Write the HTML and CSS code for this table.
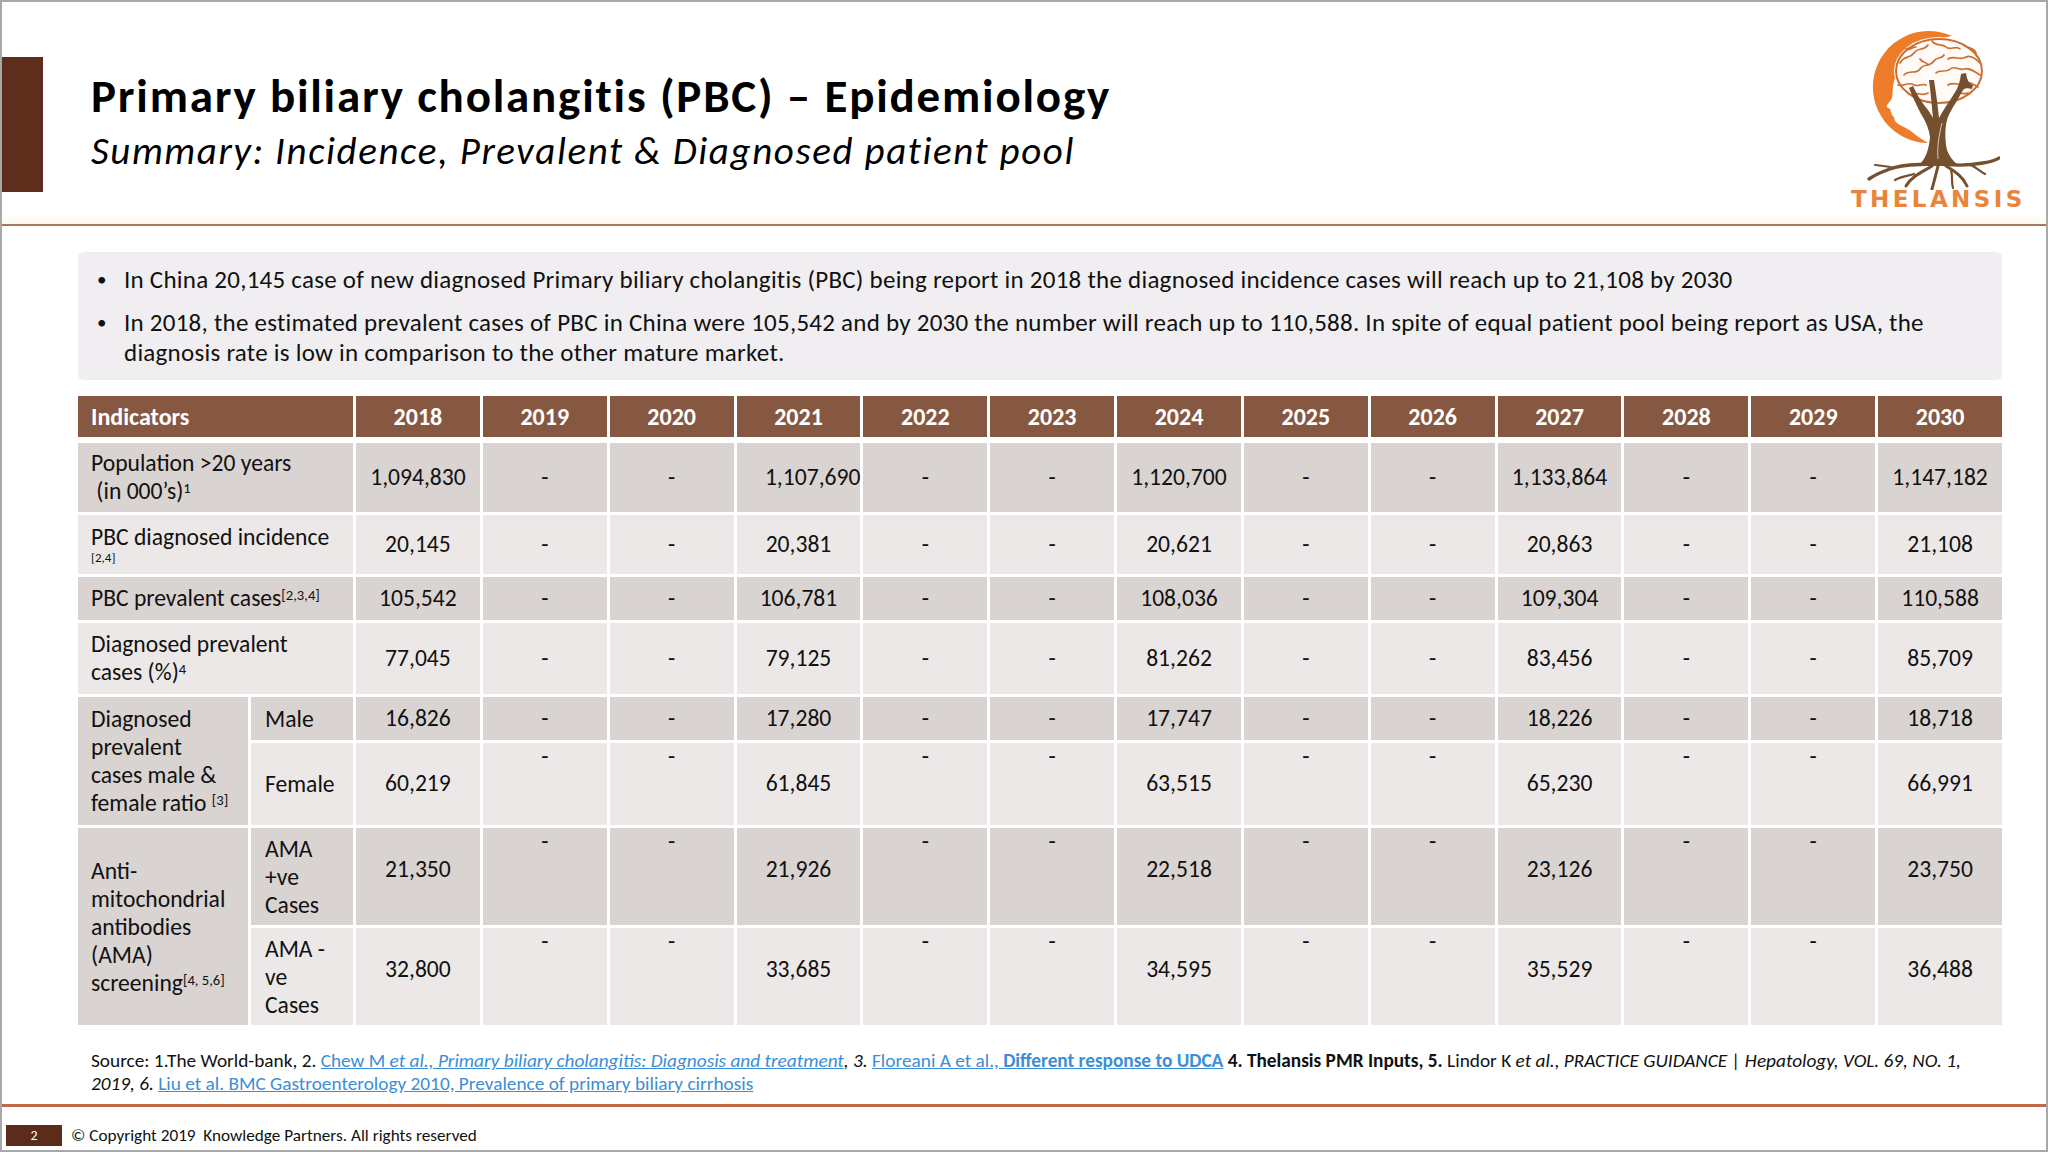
FILE: index.html
```html
<!DOCTYPE html>
<html lang="en">
<head>
<meta charset="utf-8">
<title>Primary biliary cholangitis (PBC) – Epidemiology</title>
<link rel="stylesheet" href="styles.css">
</head>
<body>
<div class="slide">
  <header class="head">
    <div class="accent"></div>
    <div class="titles">
      <h1>Primary biliary cholangitis (PBC) – Epidemiology</h1>
      <h2>Summary: Incidence, Prevalent &amp; Diagnosed patient pool</h2>
    </div>
    <div class="logo">
      <svg viewBox="0 0 150 165" width="150" height="165" aria-hidden="true">
        <path fill="#ee7d2b" d="M102,11 A56,56 0 1 0 78,118 C72,114 66,111 62,107 C56,102 50,101 47,98 C44,96 45,93 43,91 C41,90 42,88 41,87 C40,86 41,85 40,84 C38,83 36,82 37,80 C38,78 41,76 42,73 C43,69 42,61 45,53 C52,31 76,16 102,11 Z"/>
        <ellipse cx="89" cy="46" rx="45" ry="34" fill="#fff"/>
        <ellipse cx="89" cy="46" rx="43" ry="32" fill="#fffaf5" stroke="#c86f33" stroke-width="2"/>
        <g fill="none" stroke="#c86f33" stroke-width="1.7" stroke-linecap="round" stroke-linejoin="round">
          <path d="M50,38 C54,30 60,34 64,28 C68,22 74,26 78,20"/>
          <path d="M82,16 C86,22 92,18 96,22 C100,26 106,20 110,24"/>
          <path d="M114,20 C118,24 124,22 126,28"/>
          <path d="M54,50 C60,44 66,50 70,44 C74,38 80,42 84,36 C86,32 92,34 94,30"/>
          <path d="M98,34 C104,30 110,36 116,32 C120,30 126,34 130,38"/>
          <path d="M48,60 C54,62 58,56 64,60 C68,62 72,58 76,60"/>
          <path d="M86,48 C90,44 96,48 100,44 C104,40 110,46 114,44 C118,42 124,46 130,50"/>
          <path d="M62,70 C68,66 72,72 78,68"/>
          <path d="M98,60 C104,56 110,62 116,58 C120,56 124,60 128,62"/>
          <path d="M70,34 C72,38 76,36 78,40"/>
          <path d="M104,70 C108,66 114,70 118,68"/>
          <path d="M56,24 C60,26 62,22 66,22"/>
        </g>
        <path fill="#74502f" d="M68,141 C76,134 79,124 80,112 C79,104 76,97 71,89 C67,81 63,73 59,63 L63,61 C67,70 72,78 78,85 C80,88 82,91 83,93 C82,83 81,70 79,55 L84,55 C86,68 88,82 89,93 C93,85 99,77 104,69 C108,63 110,57 111,49 L116,48 C117,55 119,59 123,60 L122,64 C117,63 115,63 113,65 C109,73 102,83 98,92 C95,100 95,110 96,120 C97,128 101,134 109,141 Z"/>
        <path fill="none" stroke="#fff" stroke-width="0.9" opacity="0.75" d="M88,134 C87,122 89,110 92,98"/>
        <g fill="none" stroke="#74502f" stroke-linecap="round">
          <path stroke-width="3.4" d="M80,139 C66,140 52,139 40,144 C32,147 26,149 19,154"/>
          <path stroke-width="2.2" d="M44,143 C38,141 32,141 25,140"/>
          <path stroke-width="3" d="M82,141 C72,147 62,151 56,161"/>
          <path stroke-width="2.2" d="M64,149 C58,151 52,151 45,155"/>
          <path stroke-width="3" d="M88,141 C86,149 84,157 82,164"/>
          <path stroke-width="3.4" d="M94,139 C108,141 122,140 133,138 C139,137 145,136 149,133"/>
          <path stroke-width="3" d="M96,141 C106,147 113,152 117,161"/>
          <path stroke-width="2.2" d="M121,140 C127,143 131,147 135,149"/>
          <path stroke-width="2.2" d="M101,145 C103,151 101,157 103,163"/>
        </g>
      </svg>
      <div class="brand">THELANSIS</div>
    </div>
  </header>
  <div class="rule"></div>

  <main class="content">
    <div class="summary">
      <ul>
        <li><span class="dot">•</span><span>In China 20,145 case of new diagnosed Primary biliary cholangitis (PBC) being report in 2018 the diagnosed incidence cases will reach up to 21,108 by 2030</span></li>
        <li><span class="dot">•</span><span>In 2018, the estimated prevalent cases of PBC in China were 105,542 and by 2030 the number will reach up to 110,588. In spite of equal patient pool being report as USA, the diagnosis rate is low in comparison to the other mature market.</span></li>
      </ul>
    </div>

    <table class="data">
      <colgroup>
        <col class="c1"><col class="c2">
        <col><col><col><col><col><col><col><col><col><col><col><col><col>
      </colgroup>
      <thead>
        <tr class="hr">
          <th colspan="2" class="ind">Indicators</th>
          <th>2018</th><th>2019</th><th>2020</th><th>2021</th><th>2022</th><th>2023</th><th>2024</th><th>2025</th><th>2026</th><th>2027</th><th>2028</th><th>2029</th><th>2030</th>
        </tr>
      </thead>
      <tbody>
        <tr class="d h69">
          <td colspan="2" class="lab">Population &gt;20 years<br>&nbsp;(in 000’s)<sup>1</sup></td>
          <td>1,094,830</td><td>-</td><td>-</td><td class="flush">1,107,690</td><td>-</td><td>-</td><td>1,120,700</td><td>-</td><td>-</td><td>1,133,864</td><td>-</td><td>-</td><td>1,147,182</td>
        </tr>
        <tr class="l h59">
          <td colspan="2" class="lab">PBC diagnosed incidence<span class="ref">[2,4]</span></td>
          <td>20,145</td><td>-</td><td>-</td><td>20,381</td><td>-</td><td>-</td><td>20,621</td><td>-</td><td>-</td><td>20,863</td><td>-</td><td>-</td><td>21,108</td>
        </tr>
        <tr class="d h43">
          <td colspan="2" class="lab">PBC prevalent cases<sup>[2,3,4]</sup></td>
          <td>105,542</td><td>-</td><td>-</td><td>106,781</td><td>-</td><td>-</td><td>108,036</td><td>-</td><td>-</td><td>109,304</td><td>-</td><td>-</td><td>110,588</td>
        </tr>
        <tr class="l h71">
          <td colspan="2" class="lab">Diagnosed prevalent<br>cases (%)<sup>4</sup></td>
          <td>77,045</td><td>-</td><td>-</td><td>79,125</td><td>-</td><td>-</td><td>81,262</td><td>-</td><td>-</td><td>83,456</td><td>-</td><td>-</td><td>85,709</td>
        </tr>
        <tr class="d h43">
          <td rowspan="2" class="lab grp">Diagnosed<br>prevalent<br>cases male &amp;<br>female ratio <sup>[3]</sup></td>
          <td class="lab sub">Male</td>
          <td>16,826</td><td>-</td><td>-</td><td>17,280</td><td>-</td><td>-</td><td>17,747</td><td>-</td><td>-</td><td>18,226</td><td>-</td><td>-</td><td>18,718</td>
        </tr>
        <tr class="l h82">
          <td class="lab sub">Female</td>
          <td>60,219</td><td class="top">-</td><td class="top">-</td><td>61,845</td><td class="top">-</td><td class="top">-</td><td>63,515</td><td class="top">-</td><td class="top">-</td><td>65,230</td><td class="top">-</td><td class="top">-</td><td>66,991</td>
        </tr>
        <tr class="d h97">
          <td rowspan="2" class="lab grp">Anti-<br>mitochondrial<br>antibodies<br>(AMA)<br>screening<sup>[4, 5,6]</sup></td>
          <td class="lab sub">AMA<br>+ve<br>Cases</td>
          <td class="up">21,350</td><td class="top">-</td><td class="top">-</td><td class="up">21,926</td><td class="top">-</td><td class="top">-</td><td class="up">22,518</td><td class="top">-</td><td class="top">-</td><td class="up">23,126</td><td class="top">-</td><td class="top">-</td><td class="up">23,750</td>
        </tr>
        <tr class="l h97">
          <td class="lab sub">AMA -<br>ve<br>Cases</td>
          <td class="up">32,800</td><td class="top">-</td><td class="top">-</td><td class="up">33,685</td><td class="top">-</td><td class="top">-</td><td class="up">34,595</td><td class="top">-</td><td class="top">-</td><td class="up">35,529</td><td class="top">-</td><td class="top">-</td><td class="up">36,488</td>
        </tr>
      </tbody>
    </table>

    <p class="source">Source: 1.The World-bank, 2. <a href="#">Chew M <i>et al., Primary biliary cholangitis: Diagnosis and treatment</i></a><i>, 3. </i><a href="#">Floreani A et al., <b>Different response to UDCA</b></a> <b>4. Thelansis PMR Inputs, 5.</b> Lindor K <i>et al., PRACTICE GUIDANCE | Hepatology, VOL. 69, NO. 1,<br>2019, 6.</i> <a href="#">Liu et al. BMC Gastroenterology 2010, Prevalence of primary biliary cirrhosis</a></p>
  </main>

  <div class="footrule"></div>
  <footer class="foot">
    <span class="pg">2</span>
    <span class="copy">© Copyright 2019&nbsp; Knowledge Partners. All rights reserved</span>
  </footer>
</div>
</body>
</html>
```

FILE: styles.css
```css
html, body {
  margin: 0;
  padding: 0;
  background: #ffffff;
}

body {
  font-family: Carlito, Calibri, Lato, "Liberation Sans", sans-serif;
  color: #000;
}

.slide {
  width: 2048px;
  height: 1152px;
  box-sizing: border-box;
  border: 2px solid #a8a8a8;
  display: flex;
  flex-direction: column;
  overflow: hidden;
  background: #fff;
}

/* ---------- header ---------- */
.head {
  display: flex;
  height: 222px;
  flex: none;
}

.accent {
  flex: none;
  width: 41px;
  height: 135px;
  margin-top: 55px;
  background: #5e2d1b;
}

.titles {
  flex: 1;
  margin-left: 48px;
  padding-top: 72px;
}

.titles h1 {
  margin: 0;
  font-size: 47px;
  line-height: 45px;
  letter-spacing: 1.8px;
  font-weight: 700;
  color: #000;
}

.titles h2 {
  margin: 13px 0 0;
  font-size: 39px;
  line-height: 37px;
  letter-spacing: 1.6px;
  font-weight: 400;
  font-style: italic;
  color: #000;
}

.logo {
  flex: none;
  width: 182px;
  margin-top: 23px;
  margin-right: 14px;
}

.logo svg {
  display: block;
}

.brand {
  margin-top: -2px;
  padding-left: 1px;
  font-family: "DejaVu Sans", sans-serif;
  font-weight: 700;
  font-size: 23px;
  line-height: 23px;
  letter-spacing: 3.4px;
  color: #ea843a;
  white-space: nowrap;
}

.rule {
  flex: none;
  height: 2px;
  background: #a3785e;
  box-shadow: 0 -3px 6px rgba(240, 170, 110, 0.35);
}

/* ---------- content ---------- */
.content {
  flex: 1;
  padding: 26px 44px 0 76px;
}

.summary {
  background: #f0eef0;
  border-radius: 6px;
  padding: 13px 20px 12px 0;
}

.summary ul {
  margin: 0;
  padding: 0;
  list-style: none;
}

.summary li {
  display: flex;
  font-size: 25px;
  line-height: 30px;
  letter-spacing: 0.25px;
  color: #111;
}

.summary li + li {
  margin-top: 13px;
}

.summary .dot {
  flex: none;
  width: 46px;
  padding-left: 19px;
  box-sizing: border-box;
  font-size: 19px;
}

/* ---------- table ---------- */
.data {
  width: 1930px;
  margin: 13px -3px 0;
  table-layout: fixed;
  border-collapse: separate;
  border-spacing: 3px;
  font-size: 23.6px;
  line-height: 27.5px;
  color: #111;
}

.data col.c1 { width: 170px; }
.data col.c2 { width: 102px; }

.data th {
  background: #875841;
  color: #fff;
  font-weight: 700;
  font-size: 24px;
  text-align: center;
  padding: 0 13px;
  border-bottom: 3px solid #fff;
}

.data th.ind {
  text-align: left;
}

.data td {
  padding: 0 13px;
  text-align: center;
  vertical-align: middle;
  white-space: nowrap;
}

.data td.lab {
  text-align: left;
  white-space: normal;
}

.data td.grp,
.data td.sub {
  line-height: 28px;
}

.data td.sub {
  padding-left: 14px;
}

.data td.top {
  vertical-align: top;
}

.data td.up {
  padding-bottom: 13px;
}

.data td.flush {
  text-align: right;
  padding-right: 0;
}

.data tr.d td { background: #d9d3d1; }
.data tr.l td { background: #ece8e7; }

.data tr.hr  { height: 44px; }
.data tr.h69 { height: 69px; }
.data tr.h59 { height: 59px; }
.data tr.h43 { height: 43px; }
.data tr.h71 { height: 71px; }
.data tr.h82 { height: 82px; }
.data tr.h97 { height: 97px; }

.data sup {
  font-size: 62%;
  line-height: 0;
  vertical-align: 0.42em;
}

.data .ref {
  display: block;
  font-size: 13px;
  line-height: 14px;
}

/* ---------- source ---------- */
.source {
  margin: 22px 0 0 13px;
  font-size: 19.3px;
  line-height: 22.5px;
  color: #111;
}

.source a {
  color: #3b8ed6;
  text-decoration: underline;
}

/* ---------- footer ---------- */
.footrule {
  flex: none;
  height: 3px;
  background: #c0694a;
}

.foot {
  flex: none;
  height: 43px;
  box-sizing: border-box;
  padding-top: 18px;
  display: flex;
  align-items: flex-start;
}

.pg {
  width: 56px;
  height: 21px;
  margin-left: 4px;
  background: #5c2c1a;
  color: #fff;
  font-size: 14px;
  line-height: 21px;
  text-align: center;
}

.copy {
  margin-left: 9px;
  font-size: 17.2px;
  line-height: 21px;
  color: #111;
}
```
